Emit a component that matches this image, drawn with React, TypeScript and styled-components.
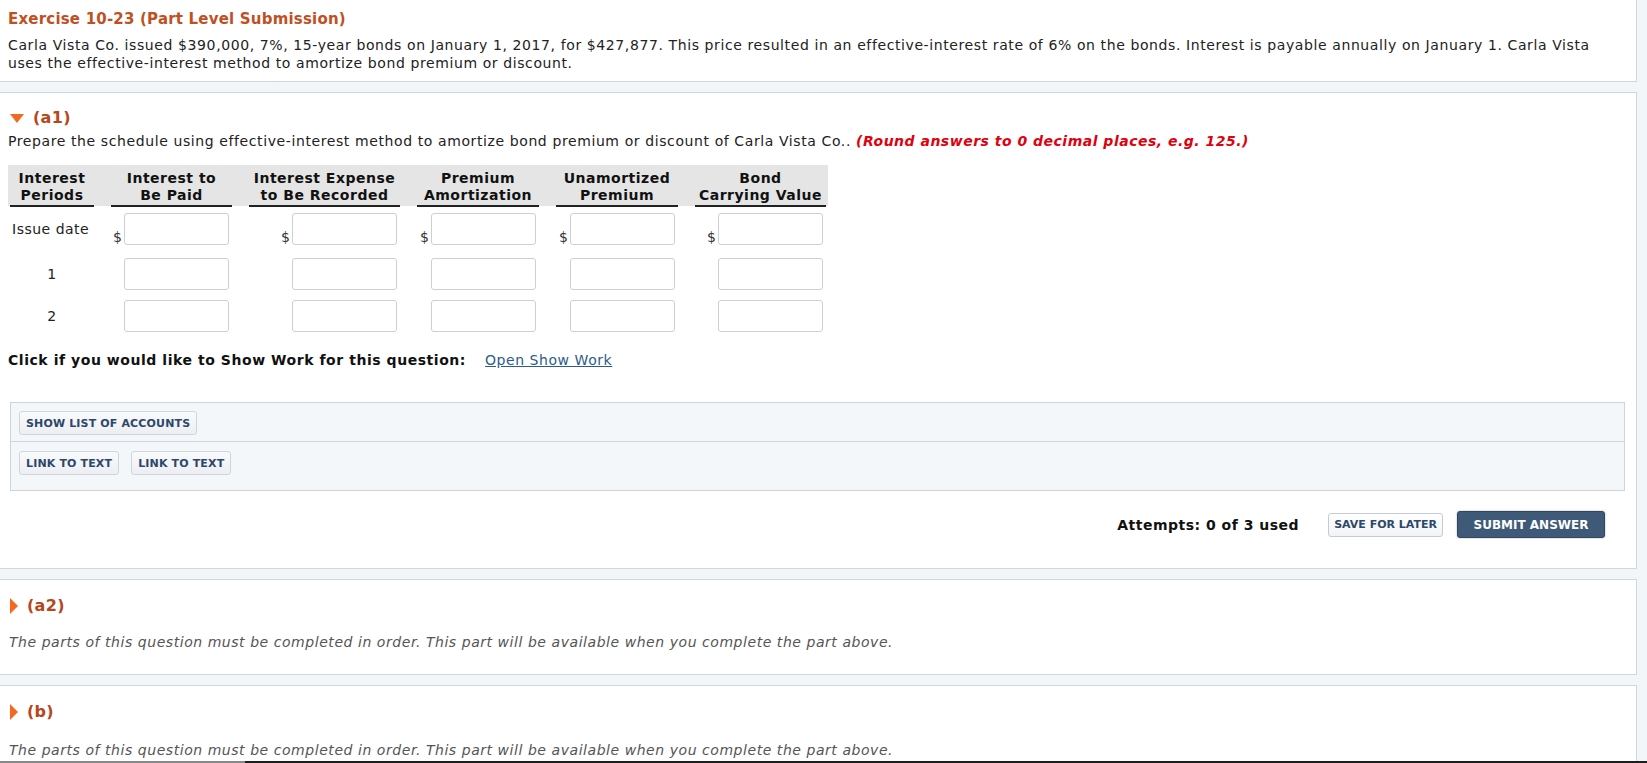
import React from "react";
import styled, { createGlobalStyle } from "styled-components";

const GlobalStyle = createGlobalStyle`
  html, body { margin: 0; padding: 0; }
  body {
    background: #f3f6f9;
    font-family: "DejaVu Sans", Verdana, sans-serif;
    color: #222;
    overflow: hidden;
  }
  * { box-sizing: border-box; }
`;

const Page = styled.div`
  width: 1647px;
  height: 763px;
  display: flex;
  flex-direction: column;
  gap: 10px;
  overflow: hidden;
`;

const Box = styled.section`
  width: 1637px;
  background: #fff;
  border: 1px solid #cfd6de;
  border-left: none;
  padding: 0 0 0 8px;
  flex-shrink: 0;
`;

const IntroBox = styled(Box)`
  border-top: none;
  padding-top: 9px;
  height: 82px;
`;

const Title = styled.h1`
  margin: 0 0 7px;
  font-size: 15px;
  letter-spacing: 0.2px;
  line-height: 20px;
  font-weight: bold;
  color: #c0501f;
`;

const Para = styled.p`
  margin: 0;
  font-size: 14px;
  letter-spacing: 0.6px;
  line-height: 18px;
  color: #222;
  padding-right: 30px;
`;

const PartHeader = styled.div`
  display: flex;
  align-items: center;
  gap: 9px;
  font-size: 16px;
  letter-spacing: 0.3px;
  line-height: 20px;
  font-weight: bold;
  color: #b8461c;
`;

const Triangle = styled.span<{ $open?: boolean }>`
  display: inline-block;
  width: 0;
  height: 0;
  margin-left: 2px;
  ${(p) =>
    p.$open
      ? `border-left: 7px solid transparent; border-right: 7px solid transparent; border-top: 9px solid #f26a21;`
      : `border-top: 8px solid transparent; border-bottom: 8px solid transparent; border-left: 8px solid #f26a21;`}
`;

const A1Box = styled(Box)`
  height: 477px;
  padding-top: 15px;
`;

const Instruction = styled(Para)`
  margin-top: 4px;
`;

const Red = styled.span`
  color: #e0000e;
  font-weight: bold;
  font-style: italic;
  letter-spacing: 0.5px;
`;

const cols = "84px 121px 151px 122px 122px 131px";

const HeaderRow = styled.div`
  margin-top: 15px;
  display: grid;
  grid-template-columns: ${cols};
  column-gap: 17px;
  background: #e5e5e5;
  width: 820px;
  padding: 0 1px 0 2px;
  height: 41px;
  align-items: end;
`;

const HeadCell = styled.div`
  text-align: center;
  font-size: 14px;
  letter-spacing: 0.5px;
  font-weight: bold;
  line-height: 17px;
  color: #111;
  border-bottom: 2px solid #222;
  padding-bottom: 1px;
  margin-bottom: -1px;
  white-space: nowrap;
`;

const Row = styled.div<{ $gap: number }>`
  display: grid;
  grid-template-columns: ${cols};
  column-gap: 17px;
  padding: 0 1px 0 2px;
  width: 820px;
  margin-top: ${(p) => p.$gap}px;
  height: 32px;
`;

const Label = styled.div<{ $center?: boolean }>`
  font-size: 14px;
  letter-spacing: 0.5px;
  line-height: 18px;
  padding-top: 7px;
  white-space: nowrap;
  text-align: ${(p) => (p.$center ? "center" : "left")};
  padding-left: ${(p) => (p.$center ? "0" : "2px")};
  color: #222;
`;

const Cell = styled.div`
  display: flex;
  justify-content: flex-end;
  align-items: flex-end;
  gap: 2px;
  padding-right: 3px;
`;

const Dollar = styled.span`
  font-size: 14px;
  line-height: 16px;
  color: #333;
`;

const Input = styled.input`
  width: 105px;
  height: 32px;
  border: 1px solid #cfcfcf;
  border-radius: 3px;
  background: #fff;
  font: inherit;
  padding: 0 4px;
  outline: none;
`;

const ShowWork = styled.div`
  margin-top: 19px;
  display: flex;
  align-items: center;
  gap: 19px;
  font-size: 14px;
  letter-spacing: 0.55px;
  line-height: 18px;
`;

const Bold = styled.span`
  font-weight: bold;
  color: #111;
`;

const Link = styled.a`
  color: #2b5d8c;
  text-decoration: underline;
  cursor: pointer;
`;

const Panel = styled.div`
  margin: 33px 0 0 2px;
  width: 1615px;
  background: #f4f7fa;
  border: 1px solid #cdd4dc;
`;

const PanelRow = styled.div<{ $last?: boolean }>`
  display: flex;
  gap: 12px;
  padding: ${(p) => (p.$last ? "9px 8px 15px" : "8px 8px 6px")};
  border-top: ${(p) => (p.$last ? "1px solid #cdd4dc" : "none")};
`;

const Button = styled.button`
  height: 24px;
  padding: 0 6px;
  border: 1px solid #cfd5dc;
  border-radius: 3px;
  background: linear-gradient(#f9fafb, #eceff2);
  color: #2c476a;
  font-family: "DejaVu Sans", Verdana, sans-serif;
  font-size: 11px;
  font-weight: bold;
  letter-spacing: 0.15px;
  white-space: nowrap;
  cursor: pointer;
`;

const Footer = styled.div`
  margin-top: 20px;
  display: flex;
  justify-content: flex-end;
  align-items: center;
  padding-right: 31px;
`;

const Attempts = styled.span`
  font-size: 14px;
  letter-spacing: 0.5px;
  font-weight: bold;
  color: #111;
  margin-right: 29px;
`;

const SaveButton = styled(Button)`
  height: 24px;
  padding: 0 5px;
  margin-right: 14px;
  border-color: #c3ccd6;
  background: linear-gradient(#ffffff, #f1f4f7);
  letter-spacing: 0;
`;

const SubmitButton = styled(Button)`
  width: 148px;
  height: 27px;
  background: #3e5a78;
  border: 1px solid #2f4862;
  box-shadow: 0 0 2px rgba(0, 0, 0, 0.35);
  color: #fff;
  font-size: 12px;
  letter-spacing: 0;
`;

const LockedBox = styled(Box)<{ $last?: boolean }>`
  height: ${(p) => (p.$last ? "90px" : "96px")};
  padding-top: 16px;
  ${(p) => (p.$last ? "border-bottom: none;" : "")}
`;

const Locked = styled.p<{ $space: number }>`
  margin: ${(p) => p.$space}px 0 0 1px;
  font-size: 14px;
  letter-spacing: 0.55px;
  line-height: 18px;
  font-style: italic;
  color: #555;
`;

const BottomBar = styled.div`
  position: fixed;
  left: 0;
  bottom: 0;
  width: 1647px;
  height: 2px;
  background: linear-gradient(90deg, #888 0 245px, #1d1d1d 245px 100%);
`;

const rows = [
  { label: "Issue date", gap: 7 },
  { label: "1", gap: 13 },
  { label: "2", gap: 10 },
];

const LOCKED_TEXT =
  "The parts of this question must be completed in order. This part will be available when you complete the part above.";

export default function App() {
  return (
    <>
      <GlobalStyle />
      <Page>
        <IntroBox>
          <Title>Exercise 10-23 (Part Level Submission)</Title>
          <Para>
            Carla Vista Co. issued $390,000, 7%, 15-year bonds on January 1, 2017, for $427,877. This price
            resulted in an effective-interest rate of 6% on the bonds. Interest is payable annually on January 1.
            Carla Vista uses the effective-interest method to amortize bond premium or discount.
          </Para>
        </IntroBox>

        <A1Box>
          <PartHeader>
            <Triangle $open />
            (a1)
          </PartHeader>
          <Instruction>
            Prepare the schedule using effective-interest method to amortize bond premium or discount of Carla
            Vista Co.. <Red>(Round answers to 0 decimal places, e.g. 125.)</Red>
          </Instruction>

          <HeaderRow>
            <HeadCell>
              Interest
              <br />
              Periods
            </HeadCell>
            <HeadCell>
              Interest to
              <br />
              Be Paid
            </HeadCell>
            <HeadCell>
              Interest Expense
              <br />
              to Be Recorded
            </HeadCell>
            <HeadCell>
              Premium
              <br />
              Amortization
            </HeadCell>
            <HeadCell>
              Unamortized
              <br />
              Premium
            </HeadCell>
            <HeadCell>
              Bond
              <br />
              Carrying Value
            </HeadCell>
          </HeaderRow>

          {rows.map((r, i) => (
            <Row key={r.label} $gap={r.gap}>
              <Label $center={i > 0}>{r.label}</Label>
              {[0, 1, 2, 3, 4].map((c) => (
                <Cell key={c}>
                  {i === 0 && <Dollar>$</Dollar>}
                  <Input type="text" />
                </Cell>
              ))}
            </Row>
          ))}

          <ShowWork>
            <Bold>Click if you would like to Show Work for this question:</Bold>
            <Link>Open Show Work</Link>
          </ShowWork>

          <Panel>
            <PanelRow>
              <Button>SHOW LIST OF ACCOUNTS</Button>
            </PanelRow>
            <PanelRow $last>
              <Button>LINK TO TEXT</Button>
              <Button>LINK TO TEXT</Button>
            </PanelRow>
          </Panel>

          <Footer>
            <Attempts>Attempts: 0 of 3 used</Attempts>
            <SaveButton>SAVE FOR LATER</SaveButton>
            <SubmitButton>SUBMIT ANSWER</SubmitButton>
          </Footer>
        </A1Box>

        <LockedBox>
          <PartHeader>
            <Triangle />
            (a2)
          </PartHeader>
          <Locked $space={17}>{LOCKED_TEXT}</Locked>
        </LockedBox>

        <LockedBox $last>
          <PartHeader>
            <Triangle />
            (b)
          </PartHeader>
          <Locked $space={19}>{LOCKED_TEXT}</Locked>
        </LockedBox>
      </Page>
      <BottomBar />
    </>
  );
}
